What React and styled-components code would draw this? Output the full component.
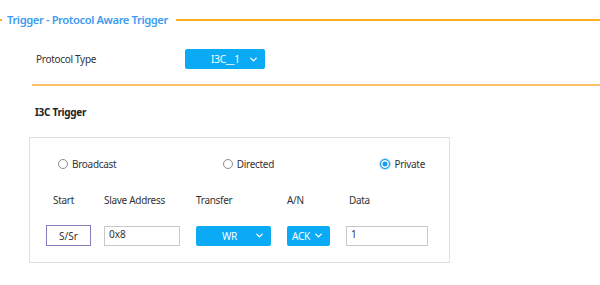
import React from "react";
import styled, { createGlobalStyle } from "styled-components";
import { ChevronDown } from "lucide-react";

const GlobalStyle = createGlobalStyle`
  body {
    margin: 0;
    background: #fff;
    font-family: "Noto Sans", "Open Sans", sans-serif;
    color: #333;
  }
`;

const Page = styled.div`
  width: 600px;
  height: 285px;
  overflow: hidden;
`;

const TitleRow = styled.div`
  display: flex;
  align-items: center;
  height: 20px;
  padding-top: 9px;
`;

const Tick = styled.span`
  width: 2px;
  height: 2px;
  background: #ffad1f;
  margin-right: 5px;
  margin-top: 2px;
`;

const Title = styled.h1`
  margin: 0;
  font-size: 11.2px;
  font-weight: 600;
  color: #3d9bf2;
  letter-spacing: -0.4px;
  white-space: nowrap;
`;

const TitleLine = styled.span`
  flex: 1;
  height: 2px;
  background: #ffad1f;
  margin-left: 8px;
  margin-top: 2px;
`;

const FormRow = styled.div`
  display: flex;
  align-items: center;
  margin-top: 20px;
  padding-left: 36px;
`;

const Label = styled.span`
  font-size: 10px;
  letter-spacing: -0.3px;
  line-height: 14px;
  color: #333;
  width: ${(p) => p.$width || "auto"};
  padding-left: ${(p) => p.$indent || 0}px;
  white-space: nowrap;
`;

const Select = styled.div`
  display: flex;
  align-items: center;
  justify-content: space-between;
  box-sizing: border-box;
  width: ${(p) => p.$width}px;
  height: 20px;
  padding: 0 6px 0 ${(p) => p.$padLeft}px;
  background: #0aaaf5;
  border-radius: 2px;
  color: #fff;
  font-size: 10px;
  letter-spacing: -0.2px;
`;

const Divider = styled.div`
  height: 2px;
  background: #fcc068;
  margin: 15px 0 0 32px;
`;

const SectionTitle = styled.h2`
  margin: 19px 0 0 35px;
  font-size: 10px;
  line-height: 14px;
  letter-spacing: -0.3px;
  font-weight: 700;
  color: #222;
`;

const Card = styled.div`
  box-sizing: border-box;
  width: 421px;
  height: 126px;
  margin: 18px 0 0 29px;
  border: 1px solid #e0e0e0;
  padding-top: 19px;
`;

const RadioRow = styled.div`
  display: flex;
  justify-content: space-between;
  padding: 0 24px 0 28px;
`;

const RadioItem = styled.label`
  display: flex;
  align-items: center;
  gap: 4px;
  font-size: 10px;
  letter-spacing: -0.3px;
  line-height: 14px;
  color: #333;
`;

const RadioCircle = styled.span`
  box-sizing: border-box;
  width: 10px;
  height: 10px;
  border-radius: 50%;
  border: 1px solid ${(p) => (p.$checked ? "#1a9bf0" : "#8a8a8a")};
  background: ${(p) => (p.$checked ? "#1a9bf0" : "#fff")};
  box-shadow: ${(p) =>
    p.$checked ? "inset 0 0 0 1.5px #fff, 0 0 0 1px #b9e0fb" : "none"};
`;

const FieldGrid = styled.div`
  display: grid;
  grid-template-columns: 58px 92px 91px 59px auto;
  row-gap: 18px;
  margin-top: 22px;
  padding-left: 16px;
  align-items: center;
`;

const StartBox = styled.div`
  box-sizing: border-box;
  width: 45px;
  height: 21px;
  border: 1px solid #8a7cc2;
  display: flex;
  align-items: center;
  justify-content: center;
  font-size: 10px;
  color: #333;
`;

const TextBox = styled.div`
  box-sizing: border-box;
  width: ${(p) => p.$width}px;
  height: 20px;
  border: 1px solid #c8c8c8;
  padding: 1px 4px;
  font-size: 10px;
  line-height: 13px;
  color: #333;
`;

const Radio = ({ label, checked }) => (
  <RadioItem>
    <RadioCircle $checked={checked} />
    {label}
  </RadioItem>
);

export default function App() {
  return (
    <Page>
      <GlobalStyle />
      <TitleRow>
        <Tick />
        <Title>Trigger - Protocol Aware Trigger</Title>
        <TitleLine />
      </TitleRow>

      <FormRow>
        <Label $width="149px">Protocol Type</Label>
        <Select $width={80} $padLeft={26}>
          I3C__1
          <ChevronDown size={11} strokeWidth={3} />
        </Select>
      </FormRow>

      <Divider />

      <SectionTitle>I3C Trigger</SectionTitle>

      <Card>
        <RadioRow>
          <Radio label="Broadcast" />
          <Radio label="Directed" />
          <Radio label="Private" checked />
        </RadioRow>

        <FieldGrid>
          <Label $indent={7}>Start</Label>
          <Label>Slave Address</Label>
          <Label>Transfer</Label>
          <Label>A/N</Label>
          <Label $indent={3}>Data</Label>

          <StartBox>S/Sr</StartBox>
          <TextBox $width={76}>0x8</TextBox>
          <Select $width={75} $padLeft={26}>
            WR
            <ChevronDown size={11} strokeWidth={3} />
          </Select>
          <Select $width={43} $padLeft={5}>
            ACK
            <ChevronDown size={11} strokeWidth={3} />
          </Select>
          <TextBox $width={82}>1</TextBox>
        </FieldGrid>
      </Card>
    </Page>
  );
}
